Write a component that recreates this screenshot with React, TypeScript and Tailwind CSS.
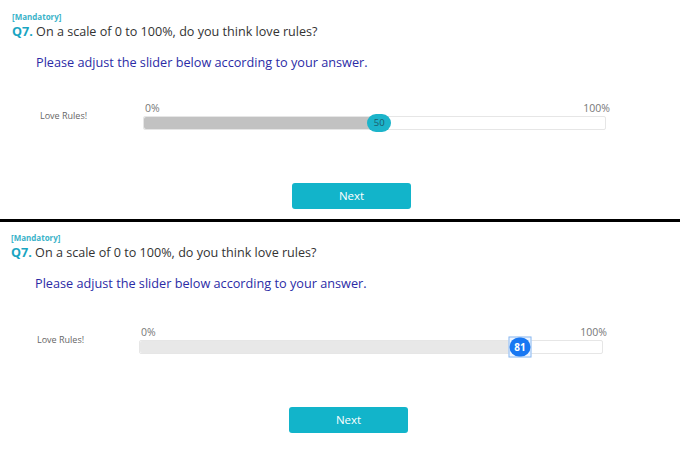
import React from 'react';

interface PanelProps {
  shift: number;
  value: number;
  pos: number;
  variant: 'teal' | 'blue';
}

const Header: React.FC<{ pad: string }> = ({ pad }) => (
  <div className={pad}>
    <div className="text-[8px] leading-[10px] font-bold text-[#3bb3c9]">[Mandatory]</div>
    <div className="mt-[2px] text-[12.6px] leading-[16px] text-[#333]">
      <span className="font-bold text-[#1aa5c2]">Q7.</span> On a scale of 0 to 100%, do you think love rules?
    </div>
  </div>
);

const SliderTrack: React.FC<{ value: number; pos: number; variant: 'teal' | 'blue'; width: number }> = ({
  value,
  pos,
  variant,
  width,
}) => {
  const x = (pos / 100) * width;
  return (
    <div className="relative h-[14px] rounded-[2px] border border-[#e6e6e6] bg-white" style={{ width }}>
      <div
        className={`absolute left-0 top-0 bottom-0 rounded-l-[2px] ${variant === 'teal' ? 'bg-[#c2c2c2]' : 'bg-[#e8e8e8]'}`}
        style={{ width: x }}
      />
      {variant === 'teal' ? (
        <div
          className="absolute top-1/2 -translate-x-1/2 -translate-y-1/2 w-[24px] h-[18px] rounded-full bg-[#1cb4ca] flex items-center justify-center text-[9.5px] text-[#1d5d6d]"
          style={{ left: x }}
        >
          {value}
        </div>
      ) : (
        <div
          className="absolute top-1/2 -translate-x-1/2 -translate-y-1/2 w-[23px] h-[21px] border border-[#8ab8f0] bg-[#eef5ff] flex items-center justify-center"
          style={{ left: x }}
        >
          <div className="w-[21px] h-[19px] rounded-full bg-[#1877f2] flex items-center justify-center text-[10px] font-bold text-white">
            {value}
          </div>
        </div>
      )}
    </div>
  );
};

const Panel: React.FC<PanelProps> = ({ shift, value, pos, variant }) => {
  const top = variant === 'teal';
  return (
    <div className={top ? 'h-[219px] pt-[12px]' : 'h-[233px] pt-[11px]'}>
      <Header pad={shift === 0 ? 'pl-[12px]' : 'pl-[11px]'} />
      <div className={`mt-[14px] text-[12.7px] leading-[16px] text-[#2b2ba6] ${shift === 0 ? 'pl-[36px]' : 'pl-[35px]'}`}>
        Please adjust the slider below according to your answer.
      </div>
      <div className={`flex ${top ? 'mt-[31px] pl-[40px]' : 'mt-[34px] pl-[37px]'}`}>
        <div className={`text-[9px] text-[#666] leading-[12px] pt-[9px] ${top ? 'w-[103px]' : 'w-[102px]'}`}>Love Rules!</div>
        <div className="flex flex-col">
          <div className={`flex justify-between text-[10.5px] leading-[15px] text-[#777] pl-[2px] ${top ? 'w-[467px]' : 'w-[468px]'}`}>
            <span>0%</span>
            <span>100%</span>
          </div>
          <SliderTrack value={value} pos={pos} variant={variant} width={top ? 463 : 464} />
        </div>
      </div>
      <div className={top ? 'mt-[52px] pl-[292px]' : 'mt-[52px] pl-[289px]'}>
        <button className="w-[119px] h-[26px] rounded-[3px] bg-[#12b4ca] text-white text-[11.5px] font-medium">
          Next
        </button>
      </div>
    </div>
  );
};

export default function App() {
  return (
    <div className="w-[680px] h-[455px] bg-white overflow-hidden" style={{ fontFamily: '"Open Sans", "Noto Sans", sans-serif' }}>
      <Panel shift={0} value={50} pos={50.8} variant="teal" />
      <div className="h-[3px] bg-black" />
      <Panel shift={1} value={81} pos={81.9} variant="blue" />
    </div>
  );
}
